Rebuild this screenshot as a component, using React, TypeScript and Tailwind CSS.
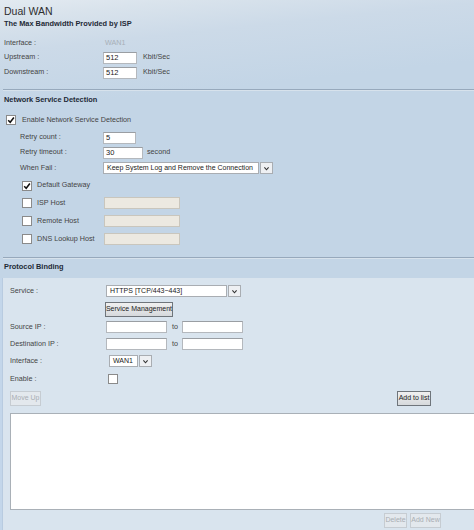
import React from "react";

const font = { fontFamily: '"Liberation Sans", Arial, sans-serif' };

function Check({ checked }: { checked?: boolean }) {
    return (
        <span className="inline-flex w-[10px] h-[10px] items-center justify-center bg-white border border-[#8a8a8a] shrink-0">
            {checked && (
                <svg viewBox="0 0 10 10" className="w-[8px] h-[8px]">
                    <path d="M1.5 5.2 L4 7.8 L8.6 1.8" fill="none" stroke="#111" strokeWidth="1.9" />
                </svg>
            )}
        </span>
    );
}

function TextBox({ w, value, disabled }: { w: string; value?: string; disabled?: boolean }) {
    return (
        <span
            className={`${w} h-[12px] flex items-center px-[2px] text-[7.5px] text-[#222] border ${
                disabled ? "bg-[#ece9e1] border-[#c9c6bd]" : "bg-white border-[#b4b8bd] border-t-[#9a9ea3]"
            }`}
        >
            {value}
        </span>
    );
}

function Select({ w, value }: { w: string; value: string }) {
    return (
        <span className="flex items-center">
            <span className={`${w} h-[12px] flex items-center px-[3px] text-[7px] text-[#222] bg-white border border-[#a9adb2] whitespace-nowrap overflow-hidden`}>
                {value}
            </span>
            <span className="w-[13px] h-[12px] ml-[1px] flex items-center justify-center bg-[#eef0f3] border border-[#a9adb2]">
                <svg viewBox="0 0 10 10" className="w-[7px] h-[7px]">
                    <path d="M2 3.5 L5 6.8 L8 3.5" fill="none" stroke="#333" strokeWidth="1.6" />
                </svg>
            </span>
        </span>
    );
}

function Btn({ label, disabled, cls = "" }: { label: string; disabled?: boolean; cls?: string }) {
    return (
        <span
            className={`h-[15px] flex items-center justify-center text-[7px] whitespace-nowrap border ${
                disabled
                    ? "text-[#a9aeb3] border-[#c6ccd2] bg-[#e3e8ed]"
                    : "text-[#1c1c1c] border-[#6f757b] bg-[linear-gradient(#f0f0f0,#d6d9dc)]"
            } ${cls}`}
        >
            {label}
        </span>
    );
}

function Divider() {
    return <div className="ml-[3px] h-px bg-[#97a9bc] shadow-[0_1px_0_#d7e2ec]" />;
}

export default function App() {
    return (
        <div style={font} className="w-[474px] h-[530px] overflow-hidden bg-[#c3d5e6] text-[#444] text-[7.2px]">
            <div className="bg-[linear-gradient(174deg,#e3eaf1_0%,#d9e3ec_6%,#ccdae8_16%,#c3d5e6_34%)] pt-[4px] pb-[6px]">
                <div className="h-[16px] pl-[4px] flex items-center text-[10.5px] text-[#2e2e2e]">Dual WAN</div>
                <div className="h-[8px] pl-[4px] flex items-center text-[7.4px] font-bold text-[#1e2a36]">
                    The Max Bandwidth Provided by ISP
                </div>

                <div className="mt-[8px] pl-[4px]">
                    <div className="h-[14px] flex items-center">
                        <span className="w-[99px]">Interface :</span>
                        <span className="text-[#a7afb7] pl-[2px]">WAN1</span>
                    </div>
                    <div className="h-[15px] flex items-center">
                        <span className="w-[99px]">Upstream :</span>
                        <TextBox w="w-[34px]" value="512" />
                        <span className="ml-[6px]">Kbit/Sec</span>
                    </div>
                    <div className="h-[15px] flex items-center">
                        <span className="w-[99px]">Downstream :</span>
                        <TextBox w="w-[34px]" value="512" />
                        <span className="ml-[6px]">Kbit/Sec</span>
                    </div>
                </div>

                <div className="mt-[9px]">
                    <Divider />
                </div>

                <div className="mt-[5px] h-[10px] pl-[4px] flex items-center text-[7.4px] font-bold text-[#1e2a36]">
                    Network Service Detection
                </div>

                <div className="mt-[8px] h-[14px] pl-[6px] flex items-center">
                    <Check checked />
                    <span className="ml-[6px]">Enable Network Service Detection</span>
                </div>

                <div className="mt-[3px] pl-[20px]">
                    <div className="h-[15px] flex items-center">
                        <span className="w-[83px]">Retry count :</span>
                        <TextBox w="w-[33px]" value="5" />
                    </div>
                    <div className="h-[15px] flex items-center">
                        <span className="w-[83px]">Retry timeout :</span>
                        <TextBox w="w-[40px]" value="30" />
                        <span className="ml-[4px]">second</span>
                    </div>
                    <div className="h-[16px] flex items-center">
                        <span className="w-[83px]">When Fail :</span>
                        <Select w="w-[156px]" value="Keep System Log and Remove the Connection" />
                    </div>
                </div>

                <div className="mt-[1px] pl-[22px]">
                    <div className="h-[17px] flex items-center">
                        <Check checked />
                        <span className="ml-[5px]">Default Gateway</span>
                    </div>
                    {["ISP Host", "Remote Host", "DNS Lookup Host"].map((l) => (
                        <div key={l} className="h-[18px] flex items-center">
                            <Check />
                            <span className="ml-[5px] w-[67px]">{l}</span>
                            <TextBox w="w-[76px]" disabled />
                        </div>
                    ))}
                </div>

                <div className="mt-[9px]">
                    <Divider />
                </div>

                <div className="mt-[4px] h-[10px] pl-[4px] flex items-center text-[7.4px] font-bold text-[#1e2a36]">
                    Protocol Binding
                </div>
            </div>

            <div className="flex h-[252px]">
                <div className="w-[3px] bg-[#c3d6ea] border-r border-[#b8cbe0]" />
                <div className="flex-1 bg-[#d9e4ee] pt-[6px]">
                    <div className="pl-[7px]">
                        <div className="h-[14px] flex items-center">
                            <span className="w-[96px]">Service :</span>
                            <Select w="w-[121px]" value="HTTPS [TCP/443~443]" />
                        </div>
                        <div className="mt-[4px] pl-[95px] flex">
                            <Btn label="Service Management" cls="w-[68px]" />
                        </div>
                        <div className="mt-[3px] h-[14px] flex items-center">
                            <span className="w-[96px]">Source IP :</span>
                            <TextBox w="w-[61px]" />
                            <span className="w-[15px] pl-[5px]">to</span>
                            <TextBox w="w-[61px]" />
                        </div>
                        <div className="mt-[3px] h-[14px] flex items-center">
                            <span className="w-[96px]">Destination IP :</span>
                            <TextBox w="w-[61px]" />
                            <span className="w-[15px] pl-[5px]">to</span>
                            <TextBox w="w-[61px]" />
                        </div>
                        <div className="mt-[3px] h-[14px] flex items-center">
                            <span className="w-[99px]">Interface :</span>
                            <Select w="w-[29px]" value="WAN1" />
                        </div>
                        <div className="mt-[4px] h-[14px] flex items-center">
                            <span className="w-[98px]">Enable :</span>
                            <Check />
                        </div>
                        <div className="mt-[5px] flex items-center justify-between pr-[43px]">
                            <Btn label="Move Up" disabled cls="w-[31px]" />
                            <Btn label="Add to list" cls="w-[34px]" />
                        </div>
                    </div>
                    <div className="mt-[7px] ml-[7px] h-[97px] bg-white border border-r-0 border-[#a9b0b7]" />
                    <div className="mt-[3px] flex justify-end gap-[3px] pr-[33px]">
                        <Btn label="Delete" disabled cls="w-[23px]" />
                        <Btn label="Add New" disabled cls="w-[31px]" />
                    </div>
                </div>
            </div>
        </div>
    );
}
